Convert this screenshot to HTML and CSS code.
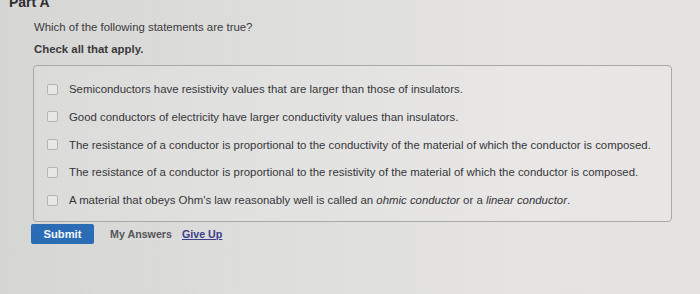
FILE: index.html
```html
<!DOCTYPE html>
<html>
<head>
<meta charset="utf-8">
<link rel="stylesheet" href="styles.css">
</head>
<body>
<div class="page">
  <h2 class="part">Part A</h2>
  <div class="question">
    <p class="prompt">Which of the following statements are true?</p>
    <p class="instr">Check all that apply.</p>
    <div class="box">
      <label class="opt"><span class="cb"></span><span>Semiconductors have resistivity values that are larger than those of insulators.</span></label>
      <label class="opt"><span class="cb"></span><span>Good conductors of electricity have larger conductivity values than insulators.</span></label>
      <label class="opt"><span class="cb"></span><span>The resistance of a conductor is proportional to the conductivity of the material of which the conductor is composed.</span></label>
      <label class="opt"><span class="cb"></span><span>The resistance of a conductor is proportional to the resistivity of the material of which the conductor is composed.</span></label>
      <label class="opt"><span class="cb"></span><span>A material that obeys Ohm's law reasonably well is called an <i>ohmic conductor</i> or a <i>linear conductor</i>.</span></label>
    </div>
    <div class="actions">
      <button class="submit">Submit</button>
      <span class="my">My Answers</span>
      <a class="giveup" href="#">Give Up</a>
    </div>
  </div>
</div>
</body>
</html>
```
FILE: styles.css
```css
html, body {
  margin: 0;
  padding: 0;
}
body {
  width: 700px;
  height: 294px;
  overflow: hidden;
  font-family: "Liberation Sans", Arial, sans-serif;
  color: #3a3a3c;
  background: linear-gradient(90deg, #d6d6d4 0%, #dededc 40%, #e5e4e2 75%, #e4e3e1 100%);
}
.page {
  padding: 0 0 0 9px;
}
.part {
  margin: -5px 0 0 0;
  font-size: 14px;
  line-height: 14px;
  font-weight: bold;
  color: #2e2e30;
}
.question {
  padding-left: 25px;
}
.prompt {
  margin: 11px 0 0 0;
  font-size: 11.4px;
  line-height: 14px;
}
.instr {
  margin: 8px 0 0 0;
  font-size: 11.4px;
  line-height: 14px;
  font-weight: bold;
}
.box {
  margin: 9px 0 0 -1px;
  width: 639px;
  height: 157px;
  border: 1px solid #a9a9a8;
  border-radius: 4px;
  background: rgba(255,255,255,0.12);
  box-sizing: border-box;
  padding: 16px 0 0 13px;
  display: flex;
  flex-direction: column;
  gap: 13.8px;
}
.opt {
  display: flex;
  align-items: center;
  gap: 11px;
  font-size: 11.4px;
  line-height: 14px;
  color: #36363a;
}
.cb {
  width: 9px;
  height: 9px;
  border: 1px solid #b4b4b4;
  border-radius: 2px;
  background: #e8e8e6;
  flex: none;
}
.actions {
  margin: 2px 0 0 -3px;
  display: flex;
  align-items: center;
}
.submit {
  width: 63px;
  height: 20px;
  border: none;
  border-radius: 2px;
  background: #2b6db4;
  color: #f4f6fa;
  font-family: "Liberation Sans", Arial, sans-serif;
  font-weight: bold;
  font-size: 11.2px;
  padding: 0;
}
.my {
  margin-left: 16px;
  font-weight: bold;
  font-size: 10.7px;
  color: #55555a;
}
.giveup {
  margin-left: 10px;
  font-weight: bold;
  font-size: 10.7px;
  color: #3b3f8a;
  text-decoration: underline;
}
```
